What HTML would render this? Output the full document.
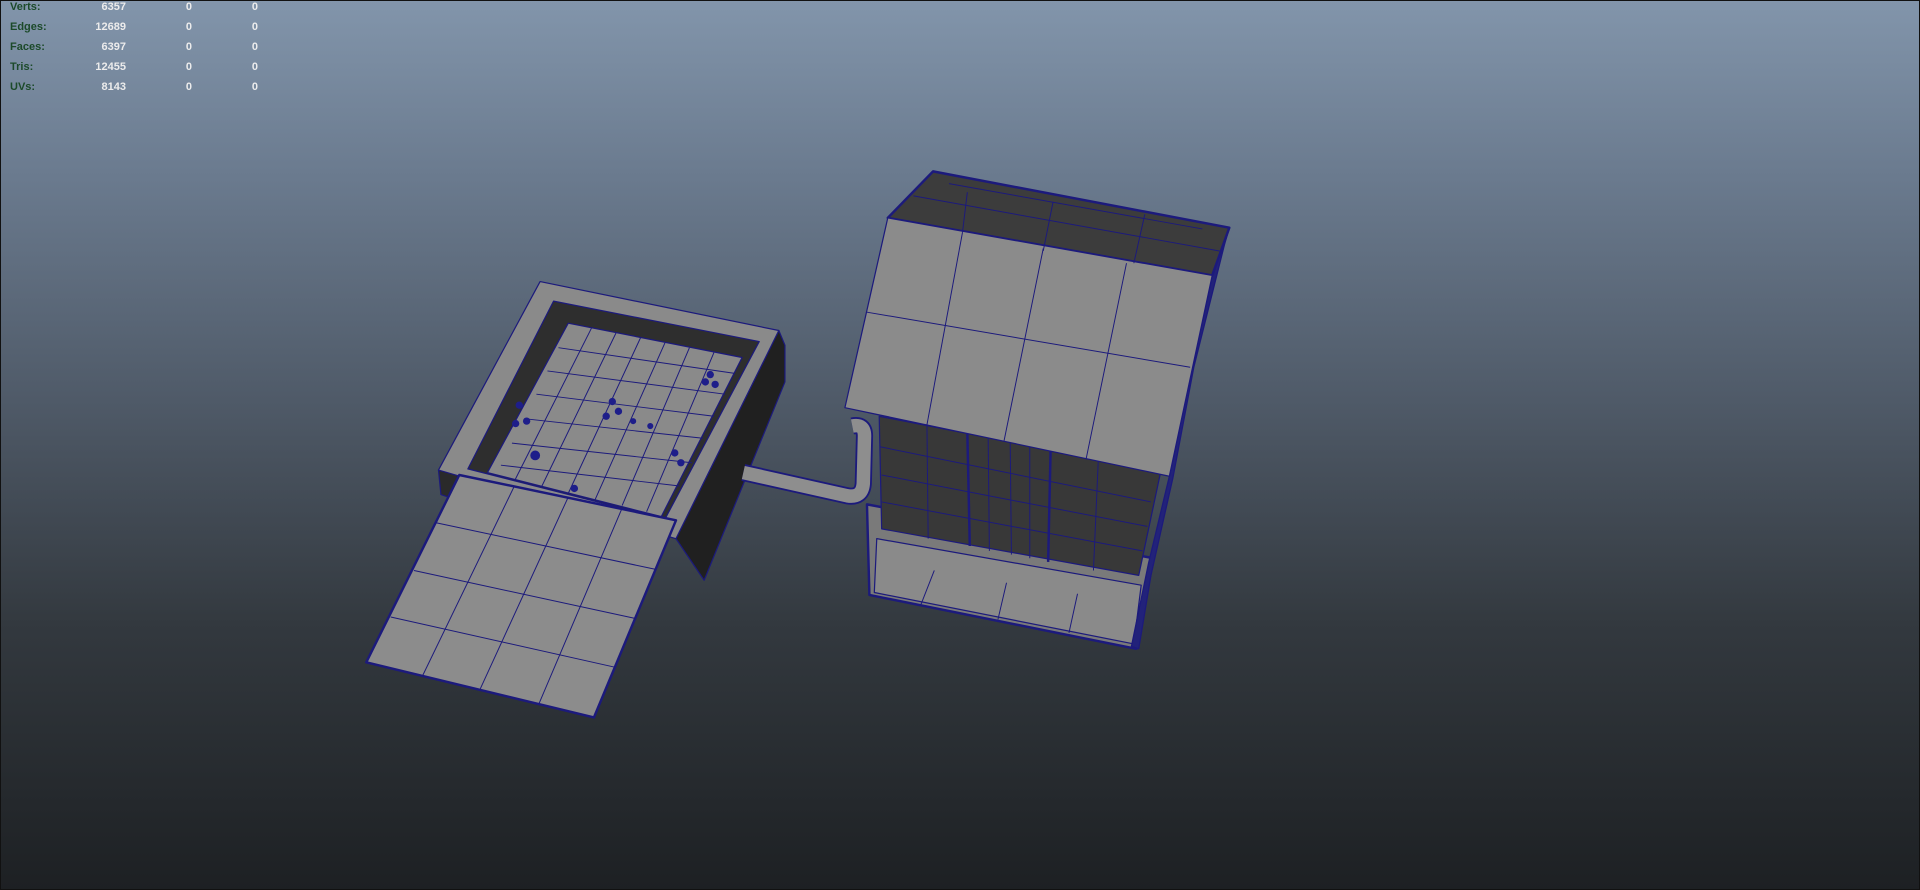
<!DOCTYPE html>
<html><head><meta charset="utf-8"><style>
html,body{margin:0;padding:0;width:1920px;height:890px;overflow:hidden}
body{background:linear-gradient(#8295ab 0%,#6a7a8e 20%,#4f5a68 45%,#33393f 70%,#1d2023 100%);position:relative;font-family:"Liberation Sans",sans-serif;box-shadow:inset 0 0 0 1px #111}
.st{position:absolute;left:0;top:0;font-size:11px;font-weight:bold}
.r{position:absolute;height:14px;line-height:14px}
.l{color:#1c4a2a;left:10px}
.n{color:#ececec;text-align:right}
svg{position:absolute;left:0;top:0}
</style></head><body>
<svg width="1920" height="890" viewBox="0 0 1568 727">
<g stroke="#1c1a7c" stroke-width="1" stroke-linejoin="round">
<!-- planter -->
<polygon points="636,270 641,282 641,312 575,474 552,440" fill="#202020"/>
<polygon points="358,384 360,404 378,410 382,383" fill="#2a2a2a"/>
<polygon points="441,230 636,270 552,440 358,384" fill="#8a8a8a"/>
<polygon points="452,246 620,279 543,424 382,383" fill="#2e2e2e"/>
<polygon points="464,264 606,292 540,422 398,386" fill="#8a8a8a"/>
<g fill="none" stroke-width="0.8">
<line x1="483" y1="268" x2="420" y2="393"/><line x1="503" y1="272" x2="442" y2="398"/>
<line x1="523" y1="276" x2="464" y2="403"/><line x1="543" y1="280" x2="486" y2="408"/>
<line x1="563" y1="284" x2="508" y2="413"/><line x1="583" y1="288" x2="528" y2="418"/>
<line x1="456" y1="284" x2="600" y2="305"/><line x1="447" y1="303" x2="592" y2="322"/>
<line x1="438" y1="322" x2="583" y2="340"/><line x1="428" y1="342" x2="574" y2="358"/>
<line x1="418" y1="362" x2="565" y2="378"/><line x1="409" y1="380" x2="555" y2="397"/>
</g>
<g fill="#1e1e8a" stroke="none">
<circle cx="424" cy="331" r="3"/><circle cx="430" cy="344" r="3"/><circle cx="421" cy="346" r="3"/>
<circle cx="437" cy="372" r="4"/><circle cx="500" cy="328" r="3"/><circle cx="505" cy="336" r="3"/>
<circle cx="495" cy="340" r="3"/><circle cx="517" cy="344" r="2.5"/><circle cx="531" cy="348" r="2.5"/>
<circle cx="580" cy="306" r="3"/><circle cx="584" cy="314" r="3"/><circle cx="576" cy="312" r="3"/>
<circle cx="551" cy="370" r="3"/><circle cx="556" cy="378" r="3"/><circle cx="469" cy="399" r="3"/>
</g>
<!-- ramp -->
<polygon points="375,388 552,425 485,586 299,541" fill="#8c8c8c" stroke-width="2"/>
<g fill="none" stroke-width="0.8">
<line x1="420" y1="397" x2="345" y2="552"/><line x1="464" y1="406" x2="392" y2="563"/>
<line x1="508" y1="415" x2="440" y2="575"/>
<line x1="356" y1="427" x2="535" y2="465"/><line x1="338" y1="466" x2="518" y2="505"/>
<line x1="319" y1="504" x2="502" y2="545"/>
</g>
<!-- pipe -->
<path d="M607,386 L692,405 Q704,407 705,395 L706,356 Q706,346 696,348" fill="none" stroke="#1c1a7c" stroke-width="14" stroke-linecap="butt"/>
<path d="M607,386 L692,405 Q704,407 705,395 L706,356 Q706,346 696,348" fill="none" stroke="#8e8e8e" stroke-width="11" stroke-linecap="butt"/>
<!-- house -->
<polygon points="708,412 942,456 928,530 710,486" fill="#7a7a7a" stroke-width="2"/>
<polygon points="716,440 932,478 926,526 714,484" fill="#8a8a8a"/>
<polygon points="718,340 948,385 930,470 720,432" fill="#383838"/>
<g fill="none" stroke-width="0.8">
<line x1="757" y1="348" x2="758" y2="440"/><line x1="790" y1="354" x2="792" y2="446" stroke-width="2"/>
<line x1="807" y1="357" x2="808" y2="450"/><line x1="825" y1="361" x2="826" y2="453"/>
<line x1="841" y1="364" x2="841" y2="456"/><line x1="858" y1="368" x2="856" y2="459" stroke-width="2"/>
<line x1="897" y1="375" x2="893" y2="466"/>
<line x1="719" y1="365" x2="940" y2="410"/><line x1="720" y1="388" x2="937" y2="430"/>
<line x1="720" y1="410" x2="933" y2="450"/>
<line x1="763" y1="466" x2="752" y2="494"/><line x1="822" y1="476" x2="815" y2="506"/><line x1="880" y1="485" x2="873" y2="517"/>
</g>
<polygon points="1004,186 1000,200 975,300 958,390 940,470 930,530 924,528 938,460 955,389 990,225" fill="#22227a"/>
<polygon points="762,140 1004,186 990,225 725,178" fill="#3c3c3c" stroke-width="2"/>
<polygon points="725,178 990,225 955,389 690,333" fill="#8b8b8b"/>
<g fill="none" stroke-width="0.8">
<line x1="790" y1="157" x2="786" y2="190"/><line x1="860" y1="165" x2="852" y2="205"/><line x1="935" y1="175" x2="926" y2="215"/>
<line x1="746" y1="160" x2="996" y2="205"/><line x1="775" y1="150" x2="982" y2="187"/>
<line x1="786" y1="190" x2="757" y2="347"/><line x1="852" y1="203" x2="820" y2="360"/>
<line x1="920" y1="215" x2="887" y2="375"/>
<line x1="708" y1="255" x2="972" y2="300"/>
</g>
</g>
</svg>
<div class="st">
<div class="r l" style="top:0px">Verts:</div><div class="r n" style="top:0px;left:60px;width:66px">6357</div><div class="r n" style="top:0px;left:170px;width:22px">0</div><div class="r n" style="top:0px;left:236px;width:22px">0</div>
<div class="r l" style="top:20px">Edges:</div><div class="r n" style="top:20px;left:60px;width:66px">12689</div><div class="r n" style="top:20px;left:170px;width:22px">0</div><div class="r n" style="top:20px;left:236px;width:22px">0</div>
<div class="r l" style="top:40px">Faces:</div><div class="r n" style="top:40px;left:60px;width:66px">6397</div><div class="r n" style="top:40px;left:170px;width:22px">0</div><div class="r n" style="top:40px;left:236px;width:22px">0</div>
<div class="r l" style="top:60px">Tris:</div><div class="r n" style="top:60px;left:60px;width:66px">12455</div><div class="r n" style="top:60px;left:170px;width:22px">0</div><div class="r n" style="top:60px;left:236px;width:22px">0</div>
<div class="r l" style="top:80px">UVs:</div><div class="r n" style="top:80px;left:60px;width:66px">8143</div><div class="r n" style="top:80px;left:170px;width:22px">0</div><div class="r n" style="top:80px;left:236px;width:22px">0</div>
</div>
</body></html>
